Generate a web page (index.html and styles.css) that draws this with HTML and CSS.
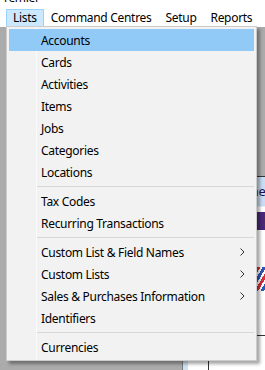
FILE: index.html
```html
<!DOCTYPE html>
<html lang="en">
<head>
    <meta charset="UTF-8">
    <meta name="viewport" content="width=device-width, initial-scale=1.0">
    <title>Lists menu</title>
    <link rel="stylesheet" href="styles.css">
</head>
<body>
    <div class="title"><span>Premier</span></div>
    <nav class="menubar">
        <span class="mb-item open">Lists</span>
        <span class="mb-item">Command Centres</span>
        <span class="mb-item">Setup</span>
        <span class="mb-item">Reports</span>
        <span class="mb-item">Window</span>
    </nav>
    <div class="workspace">
        <div class="child">
            <div class="child-head"><span>Customer</span></div>
            <div class="child-gap"></div>
            <div class="child-icon"></div>
            <div class="child-space"></div>
            <div class="child-logo"></div>
            <div class="child-link">Transactions</div>
            <div class="child-rule"></div>
            <div class="child-foot">
                <div class="foot-side"></div>
                <div class="foot-pad"></div>
                <div class="foot-main"></div>
            </div>
        </div>

        <ul class="menu">
            <li class="active">Accounts</li>
            <li>Cards</li>
            <li>Activities</li>
            <li>Items</li>
            <li>Jobs</li>
            <li>Categories</li>
            <li>Locations</li>
            <li class="sep"></li>
            <li>Tax Codes</li>
            <li>Recurring Transactions</li>
            <li class="sep"></li>
            <li>Custom List &amp; Field Names <svg class="arrow" width="5" height="8" viewBox="0 0 5 8"><polyline points="0.5,0.5 4,4 0.5,7.5" fill="none" stroke="#333" stroke-width="1"/></svg></li>
            <li>Custom Lists <svg class="arrow" width="5" height="8" viewBox="0 0 5 8"><polyline points="0.5,0.5 4,4 0.5,7.5" fill="none" stroke="#333" stroke-width="1"/></svg></li>
            <li>Sales &amp; Purchases Information <svg class="arrow" width="5" height="8" viewBox="0 0 5 8"><polyline points="0.5,0.5 4,4 0.5,7.5" fill="none" stroke="#333" stroke-width="1"/></svg></li>
            <li>Identifiers</li>
            <li class="sep"></li>
            <li>Currencies</li>
        </ul>
    </div>
</body>
</html>
```

FILE: styles.css
```css
* {
    box-sizing: border-box;
}
body {
    margin: 0;
    width: 265px;
    height: 370px;
    overflow: hidden;
    background: #fff;
    font-family: "Noto Sans", "Segoe UI", sans-serif;
    font-size: 12px;
    letter-spacing: -0.3px;
    color: #000;
}
.title {
    height: 8px;
    overflow: hidden;
}
.title span {
    display: block;
    margin: -10px 0 0 -3px;
    line-height: 16px;
}
.menubar {
    display: flex;
    height: 19px;
    padding: 1px 0 0 6px;
    white-space: nowrap;
}
.mb-item {
    height: 18px;
    padding: 0 6px;
    border: 1px solid transparent;
    line-height: 16px;
}
.mb-item.open {
    background: #cce8ff;
    border-color: #99d1ff;
}
.workspace {
    position: relative;
    height: 343px;
    padding: 149px 0 0 182px;
    background: #ababab;
}

/* child window behind the menu */
.child {
    height: 194px;
    background: #fff;
    border-top: 1px solid #333;
    border-left: 1px solid #7a7a7a;
    display: flex;
    flex-direction: column;
    white-space: nowrap;
}
.child-head {
    height: 29px;
    padding-left: 30px;
    background: #c9def2;
    color: #24124a;
    font-size: 13px;
    line-height: 29px;
}
.child-gap {
    height: 6px;
    border-top: 1px solid #e8eef5;
}
.child-icon {
    width: 20px;
    height: 18px;
    margin-left: 74px;
    background: #4b2a78;
}
.child-space {
    height: 37px;
}
.child-logo {
    width: 20px;
    height: 24px;
    margin-left: 74px;
    background: repeating-linear-gradient(120deg, #d9303a 0 3px, #fff 3px 5px, #2f57b8 5px 8px, #fff 8px 10px);
}
.child-link {
    height: 44px;
    padding: 14px 0 0 6px;
    color: #1a8a8a;
}
.child-rule {
    height: 1px;
    background: #333;
}
.child-foot {
    flex: 1;
    display: flex;
}
.foot-side {
    width: 5px;
    background: #cfe3f4;
}
.foot-pad {
    width: 21px;
    border-right: 1px solid #333;
}
.foot-main {
    flex: 1;
}

/* dropdown */
.menu {
    position: absolute;
    left: 6px;
    top: -1px;
    width: 251px;
    margin: 0;
    padding: 2px;
    list-style: none;
    border: 1px solid #ccc;
    background: linear-gradient(to right, transparent 29px, #fafafa 29px, #fafafa 30px, transparent 30px) #f2f2f2;
    box-shadow: 3px 3px 3px rgba(0, 0, 0, 0.35);
}
.menu li {
    display: flex;
    align-items: center;
    justify-content: space-between;
    height: 22px;
    padding: 0 9px 0 32px;
    white-space: nowrap;
}
.menu li.active {
    background: #91c9f7;
}
.menu li.sep {
    height: 7px;
    padding: 3px 0 3px 28px;
}
.menu li.sep::before {
    content: "";
    display: block;
    width: 100%;
    height: 1px;
    background: #d7d7d7;
}
```
